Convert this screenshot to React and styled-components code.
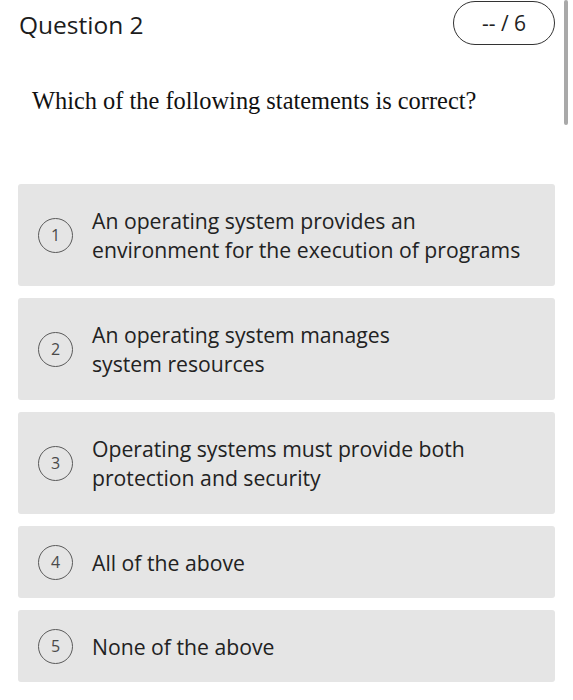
import React from "react";
import styled, { createGlobalStyle } from "styled-components";

const GlobalStyle = createGlobalStyle`
  html, body {
    margin: 0;
    padding: 0;
    background: #ffffff;
  }
  body {
    font-family: "Open Sans", "Noto Sans", sans-serif;
    color: #222;
  }
`;

const Page = styled.div`
  position: relative;
  width: 573px;
  height: 700px;
  overflow: hidden;
  background: #fff;
`;

const Header = styled.div`
  display: flex;
  align-items: center;
  justify-content: space-between;
  height: 48px;
  padding: 0 19px 0 19px;
  box-sizing: border-box;
`;

const Title = styled.h2`
  margin: 0;
  font-size: 24.5px;
  font-weight: 400;
  color: #1c1c1c;
`;

const Score = styled.div`
  display: flex;
  align-items: center;
  justify-content: center;
  width: 102px;
  height: 44px;
  box-sizing: border-box;
  border: 1.5px solid #333;
  border-radius: 22px;
  font-size: 21px;
  color: #222;
  margin-top: -2px;
  margin-right: -1px;
`;

const Scrollbar = styled.div`
  position: absolute;
  top: 0;
  right: 5px;
  width: 4px;
  height: 125px;
  border-radius: 2px;
  background: #a9a9a9;
`;

const Prompt = styled.p`
  margin: 39px 0 0 32px;
  font-family: "Liberation Serif", "Times New Roman", serif;
  font-size: 24.4px;
  color: #111;
`;

const Options = styled.div`
  display: flex;
  flex-direction: column;
  gap: 12px;
  margin: 69px 18px 0 18px;
`;

const Option = styled.div`
  display: flex;
  align-items: center;
  gap: 19px;
  min-height: ${(p) => (p.tall ? "102px" : "72px")};
  padding: 0 20px 0 20px;
  box-sizing: border-box;
  background: #e5e5e5;
  border-radius: 3px;
`;

const Badge = styled.span`
  flex: none;
  display: flex;
  align-items: center;
  justify-content: center;
  width: 35px;
  height: 35px;
  box-sizing: border-box;
  border: 1.5px solid #5a5a5a;
  border-radius: 50%;
  font-size: 16px;
  color: #4a4a4a;
`;

const Label = styled.span`
  font-size: 21.2px;
  line-height: 29px;
  color: #222;
`;

const choices = [
  ["An operating system provides an", "environment for the execution of programs"],
  ["An operating system manages", "system resources"],
  ["Operating systems must provide both", "protection and security"],
  ["All of the above"],
  ["None of the above"],
];

export default function App() {
  return (
    <Page>
      <GlobalStyle />
      <Header>
        <Title>Question 2</Title>
        <Score>-- / 6</Score>
      </Header>
      <Scrollbar />
      <Prompt>Which of the following statements is correct?</Prompt>
      <Options>
        {choices.map((lines, i) => (
          <Option key={i} tall={lines.length > 1}>
            <Badge>{i + 1}</Badge>
            <Label>
              {lines.map((l, j) => (
                <React.Fragment key={j}>
                  {j > 0 && <br />}
                  {l}
                </React.Fragment>
              ))}
            </Label>
          </Option>
        ))}
      </Options>
    </Page>
  );
}
